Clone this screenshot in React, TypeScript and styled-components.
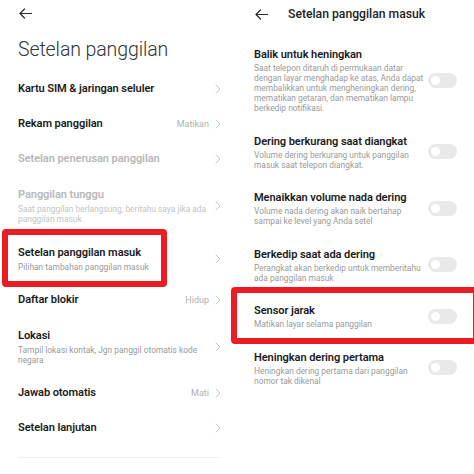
import React from "react";
import styled, { createGlobalStyle } from "styled-components";

const Global = createGlobalStyle`
  html, body { margin: 0; padding: 0; background: #ffffff; }
  body {
    font-family: Roboto, "Noto Sans", "Liberation Sans", sans-serif;
    width: 474px; height: 474px; overflow: hidden;
    -webkit-font-smoothing: antialiased;
  }
`;

const Page = styled.div`
  display: flex;
  width: 474px;
  height: 474px;
  background: #fff;
  overflow: hidden;
`;

const Panel = styled.div<{ $pl: number; $pr: number }>`
  width: 237px;
  flex: none;
  box-sizing: border-box;
  padding: 0 ${(p) => p.$pr}px 0 ${(p) => p.$pl}px;
  display: flex;
  flex-direction: column;
  position: relative;
`;

const BackBar = styled.div<{ $h: number }>`
  height: ${(p) => p.$h}px;
  display: flex;
  align-items: center;
  gap: 20px;
  padding-left: 1px;
  color: #2a2a2a;
`;

const BigTitle = styled.h1`
  margin: 12px 0 9px;
  font-size: 19.5px;
  line-height: 24px;
  font-weight: 300;
  color: #333;
  letter-spacing: -0.1px;
`;

const HeaderTitle = styled.div`
  font-size: 12.2px;
  font-weight: 500;
  color: #222;
`;

const List = styled.div<{ $mt: number }>`
  display: flex;
  flex-direction: column;
  margin-top: ${(p) => p.$mt}px;
`;

const Row = styled.div<{ $pt: number; $pb: number }>`
  position: relative;
  display: flex;
  align-items: center;
  padding: ${(p) => p.$pt}px 0 ${(p) => p.$pb}px;
`;

const Highlight = styled.div<{ $t: number; $b: number; $l: number; $r: number }>`
  position: absolute;
  top: ${(p) => p.$t}px;
  bottom: ${(p) => p.$b}px;
  left: ${(p) => p.$l}px;
  right: ${(p) => p.$r}px;
  border: 6px solid #ec1c24;
  border-radius: 4px;
  pointer-events: none;
`;

const TextBlock = styled.div`
  flex: 1;
  min-width: 0;
  display: flex;
  flex-direction: column;
`;

const Title = styled.div<{ $disabled?: boolean }>`
  font-size: 11.1px;
  line-height: 15px;
  font-weight: 600;
  letter-spacing: -0.1px;
  white-space: nowrap;
  color: ${(p) => (p.$disabled ? "#b8b8b8" : "#1c1c1c")};
`;

const Sub = styled.div<{ $disabled?: boolean; $mt: number }>`
  margin-top: ${(p) => p.$mt}px;
  font-size: 8.4px;
  line-height: 10px;
  white-space: nowrap;
  color: ${(p) => (p.$disabled ? "#c4c4c4" : "#9a9a9a")};
`;

const Trail = styled.div`
  display: flex;
  align-items: center;
  gap: 6px;
  flex: none;
`;

const Value = styled.span`
  font-size: 9px;
  color: #b0b0b0;
`;

const Toggle = styled.div`
  width: 29px;
  height: 15px;
  border-radius: 8px;
  background: #e9e9e9;
  position: relative;
  flex: none;
  &::after {
    content: "";
    position: absolute;
    left: 3px;
    top: 3px;
    width: 9px;
    height: 9px;
    border-radius: 50%;
    background: #fff;
  }
`;

const Divider = styled.div`
  height: 1px;
  background: #f0f0f0;
  margin: 12px 0 0;
  width: 202px;
`;

const BackArrow = () => (
  <svg width="13" height="11" viewBox="0 0 13 11" fill="none">
    <path d="M12.5 5.5H1M5.5 1L1 5.5L5.5 10" stroke="#2a2a2a" strokeWidth="1.2" strokeLinecap="round" strokeLinejoin="round" />
  </svg>
);

const Chevron = () => (
  <svg width="6" height="10" viewBox="0 0 6 10" fill="none">
    <path d="M1 1L5 5L1 9" stroke="#c6c6c6" strokeWidth="1" strokeLinecap="round" strokeLinejoin="round" />
  </svg>
);

type LeftItem = {
  title: string;
  sub?: string[];
  value?: string;
  disabled?: boolean;
  highlight?: boolean;
};

const leftItems: LeftItem[] = [
  { title: "Kartu SIM & jaringan seluler" },
  { title: "Rekam panggilan", value: "Matikan" },
  { title: "Setelan penerusan panggilan", disabled: true },
  {
    title: "Panggilan tunggu",
    disabled: true,
    sub: ["Saat panggilan berlangsung, beritahu saya jika ada", "panggilan masuk"],
  },
  { title: "Setelan panggilan masuk", sub: ["Pilihan tambahan panggilan masuk"], highlight: true },
  { title: "Daftar blokir", value: "Hidup" },
  { title: "Lokasi", sub: ["Tampil lokasi kontak, Jgn panggil otomatis kode", "negara"] },
  { title: "Jawab otomatis", value: "Mati" },
  { title: "Setelan lanjutan" },
];

type RightItem = { title: string; sub: string[]; highlight?: boolean };

const rightItems: RightItem[] = [
  {
    title: "Balik untuk heningkan",
    sub: [
      "Saat telepon ditaruh di permukaan datar",
      "dengan layar menghadap ke atas, Anda dapat",
      "membalikkan untuk mengheningkan dering,",
      "mematikan getaran, dan mematikan lampu",
      "berkedip notifikasi.",
    ],
  },
  { title: "Dering berkurang saat diangkat", sub: ["Volume dering berkurang untuk panggilan", "masuk saat telepon diangkat."] },
  { title: "Menaikkan volume nada dering", sub: ["Volume nada dering akan naik bertahap", "sampai ke level yang Anda setel"] },
  { title: "Berkedip saat ada dering", sub: ["Perangkat akan berkedip untuk memberitahu", "ada panggilan masuk"] },
  { title: "Sensor jarak", sub: ["Matikan layar selama panggilan"], highlight: true },
  { title: "Heningkan dering pertama", sub: ["Heningkan dering pertama dari panggilan", "nomor tak dikenal"] },
];

const SubLines = ({ lines, disabled, mt }: { lines: string[]; disabled?: boolean; mt: number }) => (
  <Sub $disabled={disabled} $mt={mt}>
    {lines.map((l, i) => (
      <div key={i}>{l}</div>
    ))}
  </Sub>
);

export default function App() {
  return (
    <>
      <Global />
      <Page>
        <Panel $pl={18} $pr={16}>
          <BackBar $h={26}>
            <BackArrow />
          </BackBar>
          <BigTitle>Setelan panggilan</BigTitle>
          <List $mt={0}>
            {leftItems.map((it) => (
              <Row key={it.title} $pt={it.sub ? 11 : 10} $pb={10}>
                {it.highlight && <Highlight $t={-5} $b={-5} $l={-16} $r={54} />}
                <TextBlock>
                  <Title $disabled={it.disabled}>{it.title}</Title>
                  {it.sub && <SubLines lines={it.sub} disabled={it.disabled} mt={2} />}
                </TextBlock>
                <Trail>
                  {it.value && <Value>{it.value}</Value>}
                  <Chevron />
                </Trail>
              </Row>
            ))}
          </List>
          <Divider />
        </Panel>
        <Panel $pl={17} $pr={17}>
          <BackBar $h={28}>
            <BackArrow />
            <HeaderTitle>Setelan panggilan masuk</HeaderTitle>
          </BackBar>
          <List $mt={9}>
            {rightItems.map((it) => (
              <Row key={it.title} $pt={10} $pb={10.5}>
                {it.highlight && <Highlight $t={-6} $b={-4} $l={-23} $r={-22} />}
                <TextBlock>
                  <Title>{it.title}</Title>
                  <SubLines lines={it.sub} mt={1} />
                </TextBlock>
                <Toggle />
              </Row>
            ))}
          </List>
        </Panel>
      </Page>
    </>
  );
}
